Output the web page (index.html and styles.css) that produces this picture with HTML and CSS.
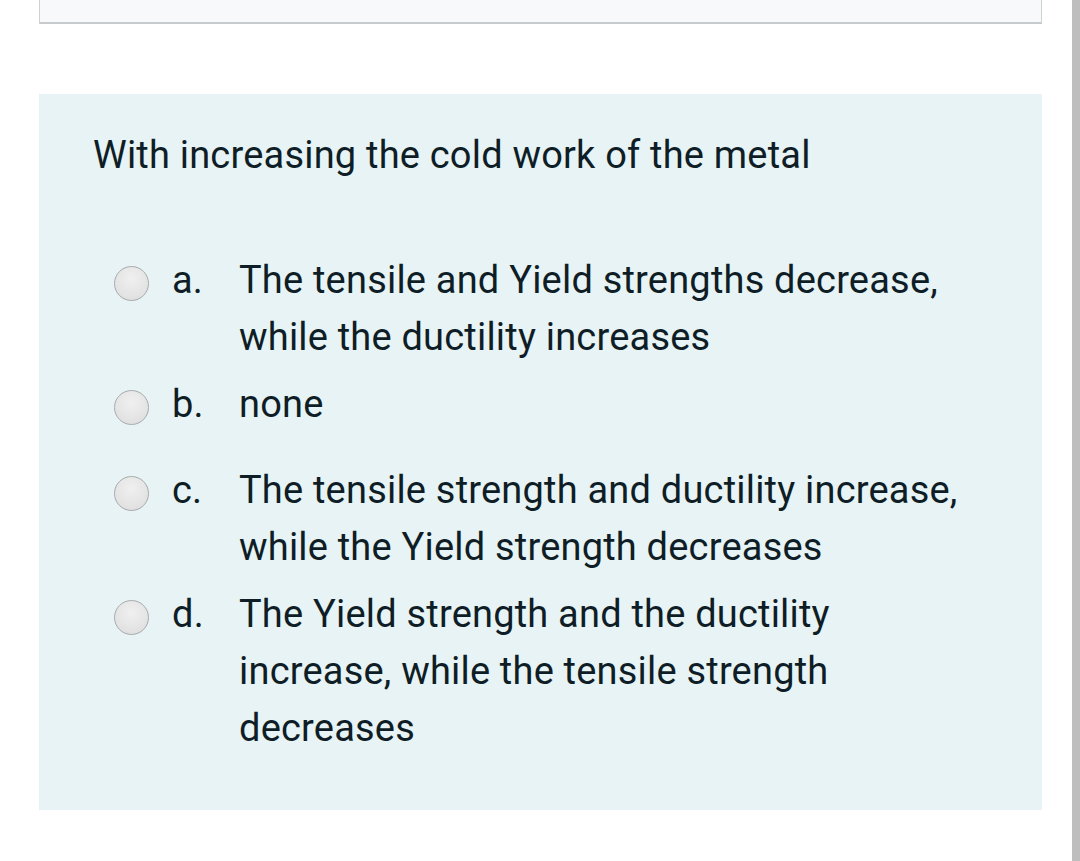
FILE: index.html
```html
<!DOCTYPE html>
<html>
<head>
<meta charset="utf-8">
<link rel="stylesheet" href="styles.css">
</head>
<body>
<div class="page">
  <div class="main">
    <div class="prev-box"></div>
    <div class="question">
      <div class="qtext">With increasing the cold work of the metal</div>
      <div class="answers">
        <div class="opt">
          <span class="radio"></span>
          <span class="letter">a.</span>
          <span class="label">The tensile and Yield strengths decrease,<br>while the ductility increases</span>
        </div>
        <div class="opt opt-extra">
          <span class="radio"></span>
          <span class="letter">b.</span>
          <span class="label">none</span>
        </div>
        <div class="opt">
          <span class="radio"></span>
          <span class="letter">c.</span>
          <span class="label">The tensile strength and ductility increase,<br>while the Yield strength decreases</span>
        </div>
        <div class="opt">
          <span class="radio"></span>
          <span class="letter">d.</span>
          <span class="label">The Yield strength and the ductility<br>increase, while the tensile strength<br>decreases</span>
        </div>
      </div>
    </div>
  </div>
  <div class="scrollbar"></div>
</div>
</body>
</html>
```

FILE: styles.css
```css
html, body {
  margin: 0;
  padding: 0;
  background: #ffffff;
}
.page {
  display: flex;
  width: 1080px;
  height: 861px;
  overflow: hidden;
  font-family: Roboto, "Liberation Sans", sans-serif;
  color: #0f1e26;
  letter-spacing: 0.2px;
}
.main {
  flex: 1;
  padding-left: 39px;
  padding-right: 30px;
}
.prev-box {
  height: 22px;
  background: #f8f9fa;
  border-left: 1px solid #cfd2d5;
  border-right: 1px solid #cfd2d5;
  border-bottom: 2px solid #c8cbce;
}
.question {
  margin-top: 70px;
  height: 716px;
  background: #e7f3f5;
  box-sizing: border-box;
  padding: 39px 0 0 54px;
}
.qtext {
  font-size: 38px;
  line-height: 44px;
}
.answers {
  margin-top: 75px;
  padding-left: 21px;
}
.opt {
  display: flex;
  align-items: flex-start;
  font-size: 38px;
  line-height: 57px;
  margin-bottom: 10px;
}
.opt-extra {
  margin-bottom: 29px;
}
.radio {
  flex: none;
  width: 33px;
  height: 33px;
  border: 1px solid #a9abad;
  border-radius: 50%;
  background: radial-gradient(circle at 50% 35%, #f0f0f0 0%, #e2e2e2 70%, #d6d6d6 100%);
  margin-top: 14px;
  margin-right: 23px;
}
.letter {
  flex: none;
  width: 67px;
}
.label {
  flex: 1;
}
.scrollbar {
  flex: none;
  width: 8px;
  height: 861px;
  background: #bebebe;
}
```
